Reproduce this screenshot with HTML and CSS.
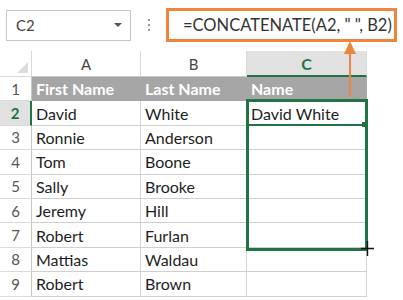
FILE: index.html
```html
<!DOCTYPE html>
<html lang="en">
<head>
  <meta charset="UTF-8">
  <title>CONCATENATE example</title>
  <link rel="stylesheet" href="styles.css">
</head>
<body>
  <div class="formula-bar">
    <div class="name-box">
      <span>C2</span>
      <span class="drop"></span>
    </div>
    <div class="dots"><i></i><i></i><i></i></div>
    <div class="formula">=CONCATENATE(A2, " ", B2)</div>
  </div>
  <div class="sheet-wrap">
    <div class="sheet">
      <div class="corner"></div>
      <div class="col-head">A</div>
      <div class="col-head">B</div>
      <div class="col-head active">C</div>

      <div class="row-head">1</div>
      <div class="cell title">First Name</div>
      <div class="cell title">Last Name</div>
      <div class="cell title">Name</div>

      <div class="row-head active">2</div>
      <div class="cell">David</div>
      <div class="cell">White</div>
      <div class="cell">David White</div>

      <div class="row-head">3</div>
      <div class="cell">Ronnie</div>
      <div class="cell">Anderson</div>
      <div class="cell"></div>

      <div class="row-head">4</div>
      <div class="cell">Tom</div>
      <div class="cell">Boone</div>
      <div class="cell"></div>

      <div class="row-head">5</div>
      <div class="cell">Sally</div>
      <div class="cell">Brooke</div>
      <div class="cell"></div>

      <div class="row-head">6</div>
      <div class="cell">Jeremy</div>
      <div class="cell">Hill</div>
      <div class="cell"></div>

      <div class="row-head">7</div>
      <div class="cell">Robert</div>
      <div class="cell">Furlan</div>
      <div class="cell"></div>

      <div class="row-head">8</div>
      <div class="cell">Mattias</div>
      <div class="cell">Waldau</div>
      <div class="cell"></div>

      <div class="row-head">9</div>
      <div class="cell">Robert</div>
      <div class="cell">Brown</div>
      <div class="cell"></div>
    </div>
    <div class="selection"></div>
    <div class="active-line"></div>
    <svg class="arrow" width="16" height="58" viewBox="0 0 16 58">
      <path d="M8 10 L8 56" stroke="#f0843c" stroke-width="2" fill="none"/>
      <path d="M8 0 L14 13 L2 13 Z" fill="#f0843c"/>
    </svg>
    <svg class="cursor" width="13" height="15" viewBox="0 0 13 15">
      <path d="M6.5 0 V15 M0 7.5 H13" stroke="#111" stroke-width="1.4" fill="none"/>
    </svg>
  </div>
</body>
</html>
```

FILE: styles.css
```css
body {
  margin: 0;
  background: #fff;
  font-family: Lato, "Open Sans", sans-serif;
  color: #222;
  width: 403px;
  height: 300px;
  overflow: hidden;
}
.formula-bar {
  display: flex;
  align-items: center;
  height: 34px;
  padding: 8px 6px 0 6px;
}
.name-box {
  box-sizing: border-box;
  width: 125px;
  height: 31px;
  border: 1px solid #c8c8c8;
  display: flex;
  align-items: center;
  justify-content: space-between;
  padding: 0 8px 0 9px;
  font-size: 15px;
  color: #444;
}
.drop {
  width: 0;
  height: 0;
  border-left: 4px solid transparent;
  border-right: 4px solid transparent;
  border-top: 4px solid #555;
}
.dots {
  width: 35px;
  display: flex;
  flex-direction: column;
  align-items: center;
  gap: 3px;
}
.dots i {
  width: 2px;
  height: 2px;
  background: #999;
}
.formula {
  box-sizing: border-box;
  height: 34px;
  flex: 1;
  border: 3px solid #f0843c;
  padding: 0 0 0 14px;
  display: flex;
  align-items: center;
  font-size: 16.5px;
  color: #333;
  white-space: nowrap;
}
.sheet-wrap {
  position: relative;
  margin-top: 9px;
}
.sheet {
  display: grid;
  grid-template-columns: 32px 109px 106px 120px;
  grid-template-rows: 26px repeat(9, 24.4px);
}
.corner {
  border-right: 1px solid #d9d9d9;
  border-bottom: 1px solid #d9d9d9;
  position: relative;
}
.corner::after {
  content: "";
  position: absolute;
  right: 3px;
  bottom: 3px;
  width: 0;
  height: 0;
  border-left: 11px solid transparent;
  border-bottom: 11px solid #dcdcdc;
}
.col-head {
  border-right: 1px solid #d9d9d9;
  border-bottom: 1px solid #c8c8c8;
  display: flex;
  align-items: center;
  justify-content: center;
  font-size: 15px;
  color: #444;
}
.col-head.active {
  background: #e1e1e1;
  border-bottom: 2px solid #217346;
  color: #217346;
  font-weight: bold;
  font-size: 16px;
}
.row-head {
  border-right: 1px solid #c8c8c8;
  border-bottom: 1px solid #dadada;
  display: flex;
  align-items: center;
  justify-content: center;
  font-size: 15px;
  color: #555;
}
.row-head.active {
  background: #e1e1e1;
  border-right: 2px solid #217346;
  color: #217346;
  font-weight: bold;
}
.cell {
  border-right: 1px solid #d4d4d4;
  border-bottom: 1px solid #cfcfcf;
  display: flex;
  align-items: center;
  padding-left: 4px;
  font-size: 16px;
  color: #1e1e1e;
  white-space: nowrap;
  overflow: hidden;
}
.cell.title {
  background: #a6a6a6;
  color: #fff;
  font-weight: bold;
  border-color: #a6a6a6;
}
.selection {
  position: absolute;
  left: 246px;
  top: 48px;
  width: 116px;
  height: 146px;
  border: 3px solid #217346;
}
.active-line {
  position: absolute;
  left: 248px;
  top: 73px;
  width: 117px;
  height: 2px;
  background: #217346;
}
.active-line::after {
  content: "";
  position: absolute;
  right: -2px;
  top: -2px;
  width: 5px;
  height: 5px;
  background: #217346;
}
.arrow {
  position: absolute;
  left: 342px;
  top: -10px;
}
.cursor {
  position: absolute;
  left: 361px;
  top: 190px;
}
```
